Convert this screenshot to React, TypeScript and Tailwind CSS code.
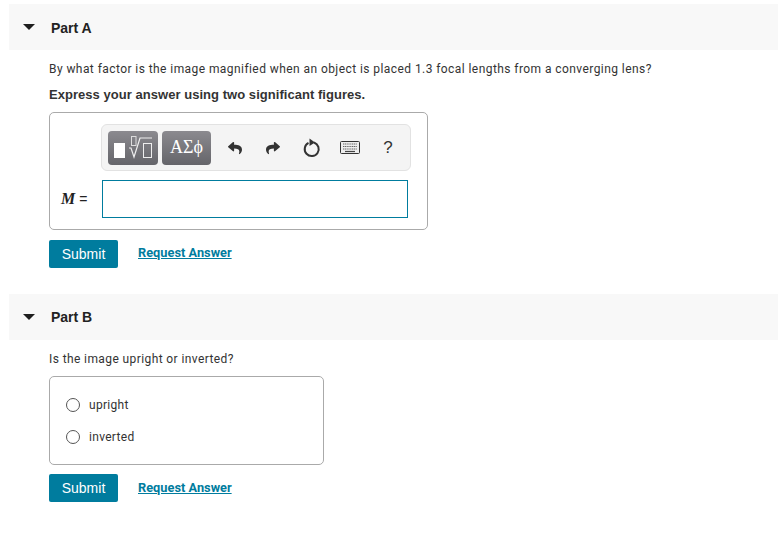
import { FaReply, FaShare } from "react-icons/fa";

const sans = "font-['Liberation_Sans',Arial,sans-serif]";

const PartHeader = ({ title, titleClass }: { title: string; titleClass: string }) => (
  <div className="flex h-[46px] items-center bg-[#f8f8f8] pl-[14px]">
    <svg width="12" height="6" viewBox="0 0 12 6" className="shrink-0">
      <path d="M0 0h12L6 6z" fill="#1f1f1f" />
    </svg>
    <h2 className={`ml-[16px] text-[14px] font-bold text-[#222] ${titleClass} ${sans}`}>{title}</h2>
  </div>
);

const Actions = ({ linkClass }: { linkClass: string }) => (
  <div className="flex items-center">
    <button className={`h-[28px] w-[69px] rounded-[2px] bg-[#007c9e] text-[14px] text-white ${sans}`}>
      Submit
    </button>
    <a className={`ml-[20px] font-['Roboto',sans-serif] text-[12.8px] font-bold text-[#007c9e] underline ${linkClass}`}>
      Request Answer
    </a>
  </div>
);

const ToolIcon = ({ children }: { children: React.ReactNode }) => (
  <span className="flex w-[38px] items-center justify-center">{children}</span>
);

const Toolbar = () => (
  <div className="flex h-[47px] w-[310px] items-center rounded-[6px] border border-[#e2e2e2] bg-[#f4f4f4] pl-[6px]">
    <div className="h-[34px] w-[50px] rounded-[4px] bg-gradient-to-b from-[#8b8a8f] to-[#65656a]">
      <svg width="50" height="34" viewBox="0 0 50 34">
        <rect x="6" y="12" width="11" height="15" fill="#fff" />
        <rect x="23.500" y="5.500" width="4.500" height="9" fill="none" stroke="#ddd" />
        <path d="M21 17l2 0 3 9 6-19h12" fill="none" stroke="#eee" strokeWidth="1.200" />
        <rect x="35.500" y="12.500" width="8" height="14" fill="none" stroke="#eee" />
      </svg>
    </div>
    <div className="ml-[4px] flex h-[34px] w-[49px] items-center justify-center rounded-[4px] bg-gradient-to-b from-[#8b8a8f] to-[#65656a] font-['Liberation_Serif',serif] text-[18px] text-white">
      ΑΣϕ
    </div>
    <div className="ml-[6px] flex items-center">
      <ToolIcon>
        <FaReply className="mr-[3px] text-[14px] text-[#333]" />
      </ToolIcon>
      <ToolIcon>
        <FaShare className="mr-[2px] text-[14px] text-[#333]" />
      </ToolIcon>
      <ToolIcon>
        <svg width="18" height="20" viewBox="0 0 18 20">
          <path d="M11 4.500a7 7 0 1 1-5.500.4" fill="none" stroke="#333" strokeWidth="2" />
          <path d="M6.500 0.500l5.500 4-5.500 3.500z" fill="#333" />
        </svg>
      </ToolIcon>
      <ToolIcon>
        <svg width="20" height="13" viewBox="0 0 20 13">
          <rect x="0.500" y="0.500" width="19" height="12" rx="1" fill="#eee" stroke="#333" />
          <path d="M3 3h14M3 5.500h14M3 8h14" stroke="#666" strokeWidth="1.200" strokeDasharray="1.200 .6" />
          <path d="M5 10.500h10" stroke="#444" strokeWidth="1.200" />
        </svg>
      </ToolIcon>
      <ToolIcon>
        <span className={`text-[17px] text-[#333] ${sans}`}>?</span>
      </ToolIcon>
    </div>
  </div>
);

const RadioRow = ({ label }: { label: string }) => (
  <label className="flex h-[32px] items-center">
    <span className="h-[14px] w-[14px] rounded-full border-[1.5px] border-[#555] bg-white" />
    <span className="ml-[9px]">{label}</span>
  </label>
);

export default function App() {
  return (
    <div className="min-h-[536px] bg-white pl-[9px] pt-[4px] font-['Roboto',sans-serif] text-[12px] text-[#333]">
      <PartHeader title="Part A" titleClass="mt-[2px]" />
      <div className="pl-[40px]">
        <p className="mt-[10px] h-[18px] whitespace-nowrap leading-[18px] tracking-[0.43px]">
          By what factor is the image magnified when an object is placed 1.3 focal lengths from a converging lens?
        </p>
        <p className={`mt-[8px] h-[18px] text-[13px] font-bold leading-[18px] tracking-[0.04px] ${sans}`}>
          Express your answer using two significant figures.
        </p>
        <div className="mt-[8px] h-[118px] w-[379px] rounded-[5px] border border-[#aaa] pl-[51px] pt-[11px]">
          <Toolbar />
          <div className="relative ml-[1px] mt-[9px]">
            <span className="absolute -left-[41px] top-[7px] whitespace-nowrap font-['Liberation_Serif',serif] text-[16px] text-[#222]">
              <b className="italic">M</b> <span className={`text-[14px] ${sans}`}>=</span>
            </span>
            <div className="h-[38px] w-[306px] border border-[#007c9e] bg-white" />
          </div>
        </div>
        <div className="mt-[10px]">
          <Actions linkClass="-mt-[3px]" />
        </div>
      </div>

      <div className="mt-[26px]">
        <PartHeader title="Part B" titleClass="" />
      </div>
      <div className="pl-[40px]">
        <p className="mt-[10px] h-[18px] leading-[18px] tracking-[0.4px]">Is the image upright or inverted?</p>
        <div className="mt-[8px] h-[89px] w-[275px] rounded-[5px] border border-[#aaa] pl-[16px] pt-[12px] tracking-[0.3px]">
          <RadioRow label="upright" />
          <RadioRow label="inverted" />
        </div>
        <div className="mt-[9px]">
          <Actions linkClass="-mt-[1px]" />
        </div>
      </div>
    </div>
  );
}
